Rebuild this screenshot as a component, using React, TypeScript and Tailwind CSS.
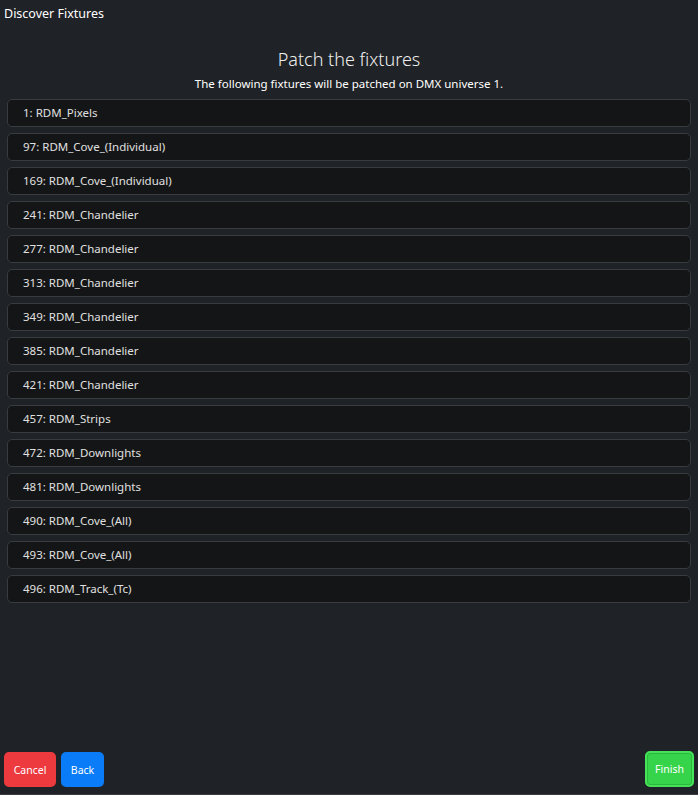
import React from 'react';

const fixtures = [
  '1: RDM_Pixels',
  '97: RDM_Cove_(Individual)',
  '169: RDM_Cove_(Individual)',
  '241: RDM_Chandelier',
  '277: RDM_Chandelier',
  '313: RDM_Chandelier',
  '349: RDM_Chandelier',
  '385: RDM_Chandelier',
  '421: RDM_Chandelier',
  '457: RDM_Strips',
  '472: RDM_Downlights',
  '481: RDM_Downlights',
  '490: RDM_Cove_(All)',
  '493: RDM_Cove_(All)',
  '496: RDM_Track_(Tc)',
];

export default function App() {
  return (
    <div
      className="w-[698px] h-[795px] bg-[#1f2226] text-[#e8e8e8] flex flex-col border-b border-[#3a3d42]"
      style={{ fontFamily: '"Noto Sans", "Open Sans", sans-serif' }}
    >
      <div className="px-1 pt-[5px] text-[12.5px] leading-[18px] text-white">Discover Fixtures</div>

      <div className="flex flex-col flex-1 px-[7px]">
        <h1 className="mt-[24px] text-center text-[18px] leading-[24px] font-light text-[#eeeeee]">
          Patch the fixtures
        </h1>
        <p className="text-center text-[11.5px] leading-[16px] text-white mt-[5px]">
          The following fixtures will be patched on DMX universe 1.
        </p>

        <div className="mt-[7px] flex flex-col gap-[6px]">
          {fixtures.map((f, i) => (
            <div
              key={i}
              className="h-[28px] flex items-center pl-[15px] rounded-[5px] bg-[#141516] border border-[#383b40] text-[11.5px] text-[#e0e0e0]"
            >
              {f}
            </div>
          ))}
        </div>

        <div className="flex-1" />
      </div>

      <div className="flex items-center justify-between px-[4px] pb-[7px]">
        <div className="flex gap-[5px]">
          <button className="h-[35px] w-[52px] rounded-[5px] bg-[#ec3a3f] text-white text-[10.5px] pt-[3px]">Cancel</button>
          <button className="h-[35px] w-[43px] rounded-[5px] bg-[#0a7cf7] text-white text-[10.5px] pt-[3px]">Back</button>
        </div>
        <button className="h-[36px] w-[49px] rounded-[5px] bg-[#36d44a] border-[2px] border-[#46e35a] ring-1 ring-inset ring-[#2cb83d] text-white text-[10.5px] pt-[2px]">
          Finish
        </button>
      </div>
    </div>
  );
}
